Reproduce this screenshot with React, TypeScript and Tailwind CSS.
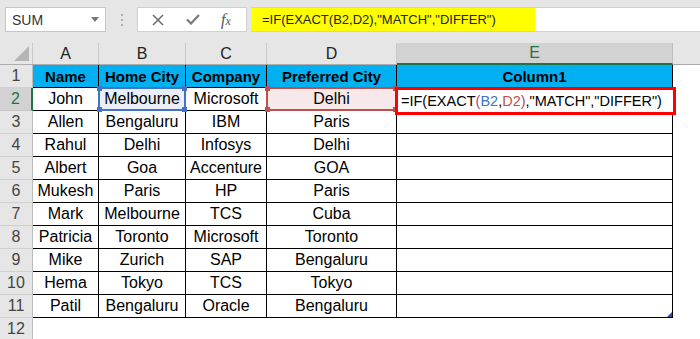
import React from 'react';

const cols = [
  { key: 'A', w: 'w-[66px]' },
  { key: 'B', w: 'w-[87px]' },
  { key: 'C', w: 'w-[81px]' },
  { key: 'D', w: 'w-[130px]' },
  { key: 'E', w: 'w-[276px]' },
];

const rows = [
  ['Allen', 'Bengaluru', 'IBM', 'Paris'],
  ['Rahul', 'Delhi', 'Infosys', 'Delhi'],
  ['Albert', 'Goa', 'Accenture', 'GOA'],
  ['Mukesh', 'Paris', 'HP', 'Paris'],
  ['Mark', 'Melbourne', 'TCS', 'Cuba'],
  ['Patricia', 'Toronto', 'Microsoft', 'Toronto'],
  ['Mike', 'Zurich', 'SAP', 'Bengaluru'],
  ['Hema', 'Tokyo', 'TCS', 'Tokyo'],
  ['Patil', 'Bengaluru', 'Oracle', 'Bengaluru'],
];

function RowHead({ n, active }: { n: number; active?: boolean }) {
  return (
    <div
      className={
        active
          ? 'w-[33px] shrink-0 flex items-center justify-center bg-[#d2d2d2] text-[#217346] border-r-2 border-r-[#217346] border-b border-b-[#c6c6c6]'
          : 'w-[33px] shrink-0 flex items-center justify-center bg-[#e6e6e6] text-[#444] border-r border-r-[#bdbdbd] border-b border-b-[#d0d0d0]'
      }
    >
      {n}
    </div>
  );
}

function Handles({ color }: { color: string }) {
  return (
    <>
      <span className={`absolute -left-[3px] -top-[3px] w-[5px] h-[5px] ${color}`} />
      <span className={`absolute -right-[3px] -top-[3px] w-[5px] h-[5px] ${color}`} />
      <span className={`absolute -left-[3px] -bottom-[3px] w-[5px] h-[5px] ${color}`} />
      <span className={`absolute -right-[3px] -bottom-[3px] w-[5px] h-[5px] ${color}`} />
    </>
  );
}

export default function App() {
  return (
    <div
      className="w-[700px] h-[339px] overflow-hidden bg-white text-black text-[16px] leading-none"
      style={{ fontFamily: '"Liberation Sans", Arial, sans-serif' }}
    >
      {/* Formula bar */}
      <div className="h-[43px] bg-[#e6e6e6] flex items-start pt-[7px] pl-[5px]">
        <div className="w-[101px] h-[25px] bg-white border border-[#c6c6c6] flex items-center justify-between pl-[6px] pr-[6px] text-[14px] text-[#333]">
          <span>SUM</span>
          <svg width="8" height="5" viewBox="0 0 8 5">
            <path d="M0 0h8L4 5z" fill="#777" />
          </svg>
        </div>
        <div className="w-[31px] h-[25px] flex flex-col items-center justify-center gap-[3px]">
          <span className="w-[2px] h-[2px] bg-[#b0b0b0]" />
          <span className="w-[2px] h-[2px] bg-[#b0b0b0]" />
          <span className="w-[2px] h-[2px] bg-[#b0b0b0]" />
        </div>
        <div className="w-[110px] h-[25px] bg-white border border-[#d0d0d0] flex items-center">
          <svg className="ml-[14px]" width="12" height="12" viewBox="0 0 12 12">
            <path d="M1 1l10 10M11 1L1 11" stroke="#6f6f6f" strokeWidth="1.6" />
          </svg>
          <svg className="ml-[22px]" width="14" height="11" viewBox="0 0 14 11">
            <path d="M1 5.5l4 4L13 1" stroke="#7a7a7a" strokeWidth="2.2" fill="none" />
          </svg>
          <span
            className="ml-[21px] italic text-[16px] text-[#555]"
            style={{ fontFamily: '"Liberation Serif", serif' }}
          >
            f<span className="text-[12px]">x</span>
          </span>
        </div>
        <div className="ml-[4px] flex-1 h-[25px] bg-white border-y border-[#d0d0d0] flex">
          <div className="w-[284px] h-full bg-[#ffff00] flex items-center pl-[11px] text-[13px] text-[#222]">
            =IF(EXACT(B2,D2),&quot;MATCH&quot;,&quot;DIFFER&quot;)
          </div>
        </div>
      </div>

      {/* Column headers */}
      <div className="flex h-[22px] bg-[#e6e6e6] border-b border-b-[#ababab]">
        <div className="w-[33px] shrink-0 relative border-r border-r-[#c8c8c8]">
          <svg className="absolute right-[3px] bottom-[3px]" width="15" height="15" viewBox="0 0 15 15">
            <path d="M15 0v15H0z" fill="#b5b5b5" />
          </svg>
        </div>
        {cols.map((c) =>
          c.key === 'E' ? (
            <div
              key={c.key}
              className={`${c.w} shrink-0 flex items-center justify-center bg-[#d2d2d2] text-[#217346] border-r border-r-[#bdbdbd] border-b-2 border-b-[#217346] -mb-[1px]`}
            >
              {c.key}
            </div>
          ) : (
            <div
              key={c.key}
              className={`${c.w} shrink-0 flex items-center justify-center text-[#222] border-r border-r-[#c8c8c8]`}
            >
              {c.key}
            </div>
          )
        )}
        <div className="flex-1" />
      </div>

      {/* Row 1: table header */}
      <div className="flex h-[23px]">
        <RowHead n={1} />
        {['Name', 'Home City', 'Company', 'Preferred City', 'Column1'].map((t, i) => (
          <div
            key={t}
            className={`${cols[i].w} shrink-0 flex items-center justify-center bg-[#00b0f0] font-bold text-[15px] border-r border-b border-black`}
          >
            {t}
          </div>
        ))}
        <div className="flex-1" />
      </div>

      {/* Row 2: active row */}
      <div className="flex h-[23px]">
        <RowHead n={2} active />
        <div className="w-[66px] shrink-0 flex items-center justify-center border-r border-b border-black">John</div>
        <div className="w-[87px] shrink-0 relative flex items-center justify-center bg-[#e9eef8] border-r border-b border-black">
          <div className="absolute -left-[1px] -top-[1px] -right-[1px] -bottom-[1px] border-2 border-[#4472c4]">
            <Handles color="bg-[#4472c4]" />
          </div>
          <span className="relative">Melbourne</span>
        </div>
        <div className="w-[81px] shrink-0 flex items-center justify-center border-r border-b border-black">Microsoft</div>
        <div className="w-[130px] shrink-0 relative flex items-center justify-center bg-[#f7e9e9] border-r border-b border-black">
          <div className="absolute -left-[1px] -top-[1px] -right-[1px] -bottom-[1px] border-2 border-[#c0504d]">
            <Handles color="bg-[#c0504d]" />
          </div>
          <span className="relative">Delhi</span>
        </div>
        <div className="w-[276px] shrink-0 relative border-r border-b border-black">
          <div className="absolute -left-[2px] -top-[1px] w-[281px] h-[28px] border-[3px] border-[#ff0000] bg-white flex items-center pl-[3px] text-[14.5px] z-10">
            =IF(EXACT<span className="text-[#b0457a]">(</span>
            <span className="text-[#4472c4]">B2</span>,<span className="text-[#c0504d]">D2</span>
            <span className="text-[#b0457a]">)</span>,&quot;MATCH&quot;,&quot;DIFFER&quot;)
          </div>
        </div>
        <div className="flex-1" />
      </div>

      {/* Rows 3-11 */}
      {rows.map((r, ri) => (
        <div key={ri} className="flex h-[23px]">
          <RowHead n={ri + 3} />
          {r.map((t, i) => (
            <div
              key={i}
              className={`${cols[i].w} shrink-0 flex items-center justify-center border-r border-b border-black`}
            >
              {t}
            </div>
          ))}
          <div className="w-[276px] shrink-0 relative border-r border-b border-black">
            {ri === rows.length - 1 && (
              <svg className="absolute right-0 bottom-0" width="5" height="5" viewBox="0 0 5 5">
                <path d="M5 0v5H0z" fill="#2f4d9a" />
              </svg>
            )}
          </div>
          <div className="flex-1" />
        </div>
      ))}

      {/* Row 12 */}
      <div className="flex h-[23px]">
        <RowHead n={12} />
        <div className="flex-1" />
      </div>
    </div>
  );
}
